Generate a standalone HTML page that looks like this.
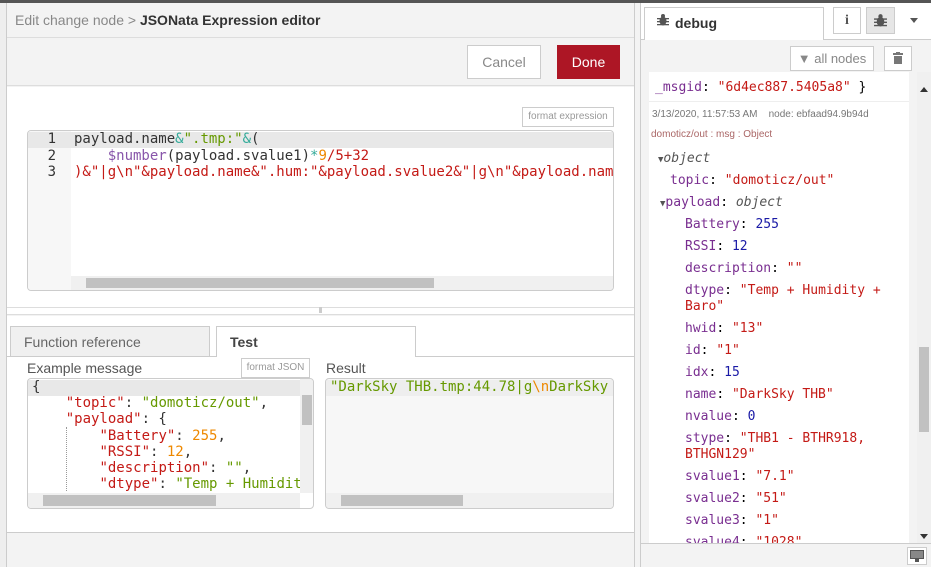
<!DOCTYPE html>
<html><head><meta charset="utf-8"><style>
*{box-sizing:border-box;margin:0;padding:0}
body{width:931px;height:567px;overflow:hidden;background:#f3f3f3;font-family:"Liberation Sans",sans-serif;position:relative}
.a{position:absolute}
.mono{font-family:"DejaVu Sans Mono","Liberation Mono",monospace}
.btn{position:absolute;border:1px solid #ccc;background:#fff;color:#888;text-align:center}
.k{color:#792e90}.s{color:#c41a16}.n{color:#1a1aa6}
.dl{position:absolute;left:685px;font-size:13px;white-space:nowrap}
.sb{position:absolute;background:#f0f0f0}
.th{position:absolute;background:#c1c1c1}
</style></head><body>
<div class="a" style="left:0;top:0;width:931px;height:3px;background:#555"></div>
<div class="a" style="left:0;top:3px;width:7px;height:564px;background:#eee;border-right:1px solid #ccc"></div>
<!-- left panel -->
<div class="a" style="left:7px;top:3px;width:627px;height:35px;background:#f3f3f3;border-bottom:1px solid #ddd"></div>
<div class="a" style="left:15px;top:12px;font-size:14px;color:#888">Edit change node &gt; <b style="color:#333">JSONata Expression editor</b></div>
<div class="a" style="left:7px;top:39px;width:627px;height:47px;background:#f3f3f3;border-bottom:1px solid #ddd"></div>
<div class="btn" style="left:467px;top:45px;width:74px;height:34px;line-height:32px;font-size:14px">Cancel</div>
<div class="btn" style="left:557px;top:45px;width:63px;height:34px;line-height:32px;font-size:14px;background:#ad1625;border-color:#ad1625;color:#fff">Done</div>
<div class="a" style="left:7px;top:87px;width:627px;height:220px;background:#fff"></div>
<div class="btn" style="left:522px;top:107px;width:92px;height:20px;line-height:18px;font-size:10px;color:#999">format expression</div>
<div class="a" style="left:27px;top:130px;width:587px;height:161px;border:1px solid #ccc;border-radius:4px;background:#fff;overflow:hidden">
 <div class="a" style="left:0;top:0;width:43px;height:160px;background:#f7f7f7"></div>
 <div class="a" style="left:0;top:1px;width:587px;height:16px;background:#e8e8e8"></div>
 <div class="a mono" style="left:0;top:0px;width:28px;font-size:14px;line-height:16.5px;color:#333;text-align:right">1<br>2<br>3</div>
 <div class="a mono" style="left:46px;top:0px;font-size:14px;line-height:16.5px;white-space:pre;color:#333">payload.name<span style="color:#3a9">&amp;</span><span style="color:#690">".tmp:"</span><span style="color:#3a9">&amp;</span>(
    <span style="color:#85a">$number</span>(payload.svalue1)<span style="color:#3a9">*</span><span style="color:#e80">9</span><span style="color:#c41a16">/5+32</span>
<span style="color:#c41a16">)&amp;"|g\n"&amp;payload.name&amp;".hum:"&amp;payload.svalue2&amp;"|g\n"&amp;payload.name</span></div>
 <div class="sb" style="left:43px;top:145px;width:543px;height:14px"></div>
 <div class="th" style="left:58px;top:147px;width:348px;height:10px"></div>
</div>
<div class="a" style="left:7px;top:307px;width:627px;height:1px;background:#ddd"></div>
<div class="a" style="left:7px;top:308px;width:627px;height:7px;background:#fff;border-bottom:1px solid #ddd"></div>
<div class="a" style="left:319px;top:307px;width:3px;height:6px;background:#ccc"></div>
<div class="a" style="left:7px;top:316px;width:627px;height:217px;background:#fff;border-bottom:1px solid #ccc"></div>
<div class="a" style="left:7px;top:356px;width:627px;height:1px;background:#ccc"></div>
<div class="a" style="left:10px;top:326px;width:200px;height:31px;background:#f0f0f0;border:1px solid #ccc;font-size:14px;color:#666;padding:7px 0 0 13px">Function reference</div>
<div class="a" style="left:216px;top:326px;width:200px;height:31px;background:#fff;border:1px solid #ccc;border-bottom:none;font-size:14px;font-weight:bold;color:#444;padding:7px 0 0 13px">Test</div>
<div class="a" style="left:27px;top:360px;font-size:14px;color:#555">Example message</div>
<div class="btn" style="left:241px;top:358px;width:69px;height:20px;line-height:18px;font-size:10px;color:#999">format JSON</div>
<div class="a" style="left:326px;top:360px;font-size:14px;color:#555">Result</div>
<div class="a" style="left:27px;top:378px;width:287px;height:131px;border:1px solid #ccc;border-radius:4px;background:#fff;overflow:hidden">
 <div class="a" style="left:0;top:1px;width:272px;height:16px;background:#e8e8e8"></div>
 <div class="a mono" style="left:4px;top:0px;font-size:14px;line-height:16.2px;white-space:pre;color:#333">{
    <span style="color:#c41a16">"topic"</span>: <span style="color:#690">"domoticz/out"</span>,
    <span style="color:#c41a16">"payload"</span>: {
        <span style="color:#c41a16">"Battery"</span>: <span style="color:#e80">255</span>,
        <span style="color:#c41a16">"RSSI"</span>: <span style="color:#e80">12</span>,
        <span style="color:#c41a16">"description"</span>: <span style="color:#690">""</span>,
        <span style="color:#c41a16">"dtype"</span>: <span style="color:#690">"Temp + Humidit</span></div>
 <div class="a" style="left:38px;top:48px;width:0;height:64px;border-left:1px dotted #999"></div>
 <div class="sb" style="left:272px;top:0;width:14px;height:114px"></div>
 <div class="th" style="left:274px;top:16px;width:10px;height:30px"></div>
 <div class="sb" style="left:0;top:114px;width:272px;height:16px"></div>
 <div class="th" style="left:15px;top:116px;width:173px;height:11px"></div>
</div>
<div class="a" style="left:325px;top:378px;width:289px;height:131px;border:1px solid #ccc;border-radius:4px;background:#f7f7f7;overflow:hidden">
 <div class="a" style="left:0;top:1px;width:289px;height:16px;background:#eee"></div>
 <div class="a mono" style="left:4px;top:0px;font-size:14px;line-height:16.5px;white-space:pre;color:#690">"DarkSky THB.tmp:44.78|g<span style="color:#e80">\n</span>DarkSky THB</div>
 <div class="sb" style="left:0;top:114px;width:289px;height:16px"></div>
 <div class="th" style="left:15px;top:116px;width:122px;height:11px"></div>
</div>
<!-- gutter -->
<div class="a" style="left:634px;top:3px;width:7px;height:564px;background:#f3f3f3;border-left:1px solid #ccc;border-right:1px solid #ccc"></div>
<!-- right panel -->
<div class="a" style="left:641px;top:3px;width:290px;height:37px;background:#fff"></div>
<div class="a" style="left:641px;top:39px;width:290px;height:1px;background:#ccc"></div>
<div class="a" style="left:644px;top:7px;width:180px;height:33px;border:1px solid #ccc;border-bottom:none;background:#fff;font-size:14px;font-weight:bold;color:#333;padding:7px 0 0 30px">debug</div>
<svg class="a" style="left:657px;top:13px" width="12" height="13" viewBox="0 0 12 13"><g fill="#555"><ellipse cx="6" cy="8" rx="3.5" ry="4.5"/><circle cx="6" cy="3" r="2"/><rect x="0" y="5" width="12" height="1.3"/><rect x="0" y="8" width="12" height="1.3"/><rect x="0" y="11" width="12" height="1.3"/></g></svg>
<div class="btn" style="left:833px;top:7px;width:28px;height:27px;line-height:25px;font-size:14px;font-weight:bold;color:#555;font-family:'Liberation Serif',serif">i</div>
<div class="btn" style="left:866px;top:7px;width:29px;height:27px;background:#e6e6e6"></div>
<svg class="a" style="left:874px;top:13px" width="13" height="14" viewBox="0 0 12 13"><g fill="#555"><ellipse cx="6" cy="8" rx="3.5" ry="4.5"/><circle cx="6" cy="3" r="2"/><rect x="0" y="5" width="12" height="1.3"/><rect x="0" y="8" width="12" height="1.3"/><rect x="0" y="11" width="12" height="1.3"/></g></svg>
<div class="a" style="left:910px;top:18px;border:4px solid transparent;border-top:5px solid #555"></div>
<div class="a" style="left:641px;top:40px;width:290px;height:32px;background:#f3f3f3"></div>
<div class="btn" style="left:790px;top:46px;width:84px;height:25px;line-height:23px;font-size:13px;color:#888">&#9660; all nodes</div>
<div class="btn" style="left:884px;top:46px;width:28px;height:25px"></div>
<svg class="a" style="left:893px;top:52px" width="10" height="12" viewBox="0 0 10 12"><rect x="0" y="1" width="10" height="2" fill="#777"/><rect x="3" y="0" width="4" height="2" fill="#777"/><rect x="1" y="4" width="8" height="8" fill="#777"/></svg>
<div class="a" style="left:641px;top:72px;width:290px;height:471px;background:#f3f3f3"></div>
<div class="a" style="left:649px;top:72px;width:260px;height:471px;background:#fff"></div>
<div class="a" style="left:649px;top:101px;width:260px;height:1px;background:#eee"></div>
<div class="a" style="left:917px;top:72px;width:14px;height:471px;background:#f0f0f0"></div>
<div class="a" style="left:919px;top:347px;width:10px;height:85px;background:#c1c1c1"></div>
<div class="a" style="left:920px;top:87px;border:4px solid transparent;border-bottom:5px solid #333;border-top:none"></div>
<div class="a" style="left:920px;top:534px;border:4px solid transparent;border-top:5px solid #333;border-bottom:none"></div>
<div class="dl mono" style="left:655px;top:80px"><span class="k">_msgid</span>: <span class="s">"6d4ec887.5405a8"</span> }</div>
<div class="a" style="left:652px;top:109px;font-size:10px;color:#777;white-space:nowrap">3/13/2020, 11:57:53 AM&nbsp;&nbsp;&nbsp; node: ebfaad94.9b94d</div>
<div class="a" style="left:651px;top:129px;font-size:10px;color:#a66;white-space:nowrap">domoticz/out : msg : Object</div>
<div class="dl mono" style="left:658px;top:151px;color:#555"><span style="font-size:9px">&#9660;</span><i>object</i></div>
<div class="dl mono" style="left:670px;top:173px"><span class="k">topic</span>: <span class="s">"domoticz/out"</span></div>
<div class="dl mono" style="left:660px;top:195px"><span style="font-size:9px;color:#555">&#9660;</span><span class="k">payload</span>: <i style="color:#555">object</i></div>
<div class="dl mono" style="top:217px"><span class="k">Battery</span>: <span class="n">255</span></div>
<div class="dl mono" style="top:239px"><span class="k">RSSI</span>: <span class="n">12</span></div>
<div class="dl mono" style="top:261px"><span class="k">description</span>: <span class="s">""</span></div>
<div class="dl mono" style="top:283px;line-height:16px"><span class="k">dtype</span>: <span class="s">"Temp + Humidity +<br>Baro"</span></div>
<div class="dl mono" style="top:321px"><span class="k">hwid</span>: <span class="s">"13"</span></div>
<div class="dl mono" style="top:343px"><span class="k">id</span>: <span class="s">"1"</span></div>
<div class="dl mono" style="top:365px"><span class="k">idx</span>: <span class="n">15</span></div>
<div class="dl mono" style="top:387px"><span class="k">name</span>: <span class="s">"DarkSky THB"</span></div>
<div class="dl mono" style="top:409px"><span class="k">nvalue</span>: <span class="n">0</span></div>
<div class="dl mono" style="top:431px;line-height:16px"><span class="k">stype</span>: <span class="s">"THB1 - BTHR918,<br>BTHGN129"</span></div>
<div class="dl mono" style="top:469px"><span class="k">svalue1</span>: <span class="s">"7.1"</span></div>
<div class="dl mono" style="top:491px"><span class="k">svalue2</span>: <span class="s">"51"</span></div>
<div class="dl mono" style="top:513px"><span class="k">svalue3</span>: <span class="s">"1"</span></div>
<div class="dl mono" style="top:535px;height:8px;overflow:hidden"><span class="k">svalue4</span>: <span class="s">"1028"</span></div>
<div class="a" style="left:641px;top:543px;width:290px;height:24px;background:#f3f3f3;border-top:1px solid #ccc"></div>
<div class="btn" style="left:907px;top:547px;width:20px;height:18px"></div>
<div class="a" style="left:910px;top:550px;width:14px;height:9px;background:#888;border:1px solid #555"></div>
<div class="a" style="left:915px;top:559px;width:4px;height:3px;background:#555"></div>
</body></html>
